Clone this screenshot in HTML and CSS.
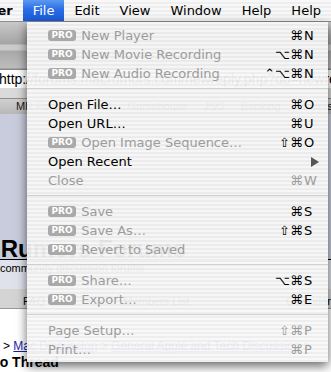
FILE: index.html
```html
<!DOCTYPE html>
<html lang="en">
<head>
  <meta charset="UTF-8">
  <title>QuickTime Player - File menu</title>
  <link rel="stylesheet" href="styles.css">
</head>
<body>
  <div class="menubar">
    <div class="app-name"><span>QuickTime Player</span></div>
    <div class="menu-title active">File</div>
    <div class="menu-title">Edit</div>
    <div class="menu-title">View</div>
    <div class="menu-title">Window</div>
    <div class="menu-title">Help</div>
    <div class="menu-title">Help</div>
  </div>

  <!-- browser window behind the menu -->
  <div class="page">
    <div class="toolbar"></div>
    <div class="address"><span>http://forums.macrumors.com/newreply.php?do=newreply&amp;noquote=1</span></div>
    <div class="address-gap"></div>
    <div class="bookmarks">
      <span>MR Forums</span><span>iPod</span><span>Gamehouse</span><span>JSG</span><span>Banking</span><span>Movers</span>
    </div>
    <div class="banner"><div class="logo">MacRumors Forums</div></div>
    <div class="tagline">community discussion forums</div>
    <div class="navbar">
      <span class="nav-item">FAQ</span><span class="nav-item">Members List</span><span class="nav-item">Calendar</span>
    </div>
    <div class="content">
      <div class="breadcrumb">&gt; <a href="#">Mac Discussion</a> &gt; <a href="#">General Apple and Tech Discussion</a> &gt;</div>
      <div class="thread-title">Reply to Thread</div>
    </div>
  </div>

  <div class="dropdown">
    <div class="item disabled">
      <span class="label"><span class="pro">PRO</span>New Player</span>
      <span class="shortcut"><span class="mods">⌘</span><span class="key">N</span></span>
    </div>
    <div class="item disabled">
      <span class="label"><span class="pro">PRO</span>New Movie Recording</span>
      <span class="shortcut"><span class="mods">⌥⌘</span><span class="key">N</span></span>
    </div>
    <div class="item disabled">
      <span class="label"><span class="pro">PRO</span>New Audio Recording</span>
      <span class="shortcut"><span class="mods">⌃⌥⌘</span><span class="key">N</span></span>
    </div>
    <div class="separator"></div>
    <div class="item">
      <span class="label">Open File…</span>
      <span class="shortcut"><span class="mods">⌘</span><span class="key">O</span></span>
    </div>
    <div class="item">
      <span class="label">Open URL…</span>
      <span class="shortcut"><span class="mods">⌘</span><span class="key">U</span></span>
    </div>
    <div class="item disabled">
      <span class="label"><span class="pro">PRO</span>Open Image Sequence…</span>
      <span class="shortcut"><span class="mods">⇧⌘</span><span class="key">O</span></span>
    </div>
    <div class="item">
      <span class="label">Open Recent</span>
      <span class="submenu-arrow"></span>
    </div>
    <div class="item disabled">
      <span class="label">Close</span>
      <span class="shortcut off"><span class="mods">⌘</span><span class="key">W</span></span>
    </div>
    <div class="separator"></div>
    <div class="item disabled">
      <span class="label"><span class="pro">PRO</span>Save</span>
      <span class="shortcut"><span class="mods">⌘</span><span class="key">S</span></span>
    </div>
    <div class="item disabled">
      <span class="label"><span class="pro">PRO</span>Save As…</span>
      <span class="shortcut"><span class="mods">⇧⌘</span><span class="key">S</span></span>
    </div>
    <div class="item disabled">
      <span class="label"><span class="pro">PRO</span>Revert to Saved</span>
    </div>
    <div class="separator"></div>
    <div class="item disabled">
      <span class="label"><span class="pro">PRO</span>Share…</span>
      <span class="shortcut"><span class="mods">⌥⌘</span><span class="key">S</span></span>
    </div>
    <div class="item disabled">
      <span class="label"><span class="pro">PRO</span>Export…</span>
      <span class="shortcut"><span class="mods">⌘</span><span class="key">E</span></span>
    </div>
    <div class="separator"></div>
    <div class="item disabled">
      <span class="label">Page Setup…</span>
      <span class="shortcut off"><span class="mods">⇧⌘</span><span class="key">P</span></span>
    </div>
    <div class="item disabled">
      <span class="label">Print…</span>
      <span class="shortcut off"><span class="mods">⌘</span><span class="key">P</span></span>
    </div>
  </div>
</body>
</html>
```

FILE: styles.css
```css
html, body {
  margin: 0;
  padding: 0;
}
body {
  width: 331px;
  height: 372px;
  overflow: hidden;
  position: relative;
  background: #fff;
  font-family: 'Liberation Sans', Arial, sans-serif;
  color: #000;
}

/* menu bar */
.menubar {
  display: flex;
  height: 21px;
  line-height: 22px;
  overflow: hidden;
  border-bottom: 1px solid #8c8c8c;
  background: repeating-linear-gradient(to bottom, #f8f8f8 0 2px, #eeeeee 2px 4px);
  font-family: 'DejaVu Sans', sans-serif;
  font-size: 13px;
  white-space: nowrap;
}
.app-name {
  width: 17px;
  margin-right: 10px;
  display: flex;
  justify-content: flex-end;
  overflow: hidden;
  font-weight: bold;
}
.app-name span { flex-shrink: 0; }
.menu-title {
  padding: 0 10px;
}
.menu-title.active {
  color: #fff;
  background: linear-gradient(to bottom, #5b9af2 0%, #2b6ce6 45%, #1a5ada 100%);
}

/* page behind */
.page {
  font-size: 11px;
}
.toolbar {
  height: 48px;
  background: linear-gradient(to bottom, #c9c9c9 0, #a4a4a4 22px, #cbcbcb 23px, #cbcbcb 28px, #a9a9a9 29px, #bdbdbd 46px, #8a8a8a 47px, #8a8a8a 48px);
}
.address {
  height: 18px;
  line-height: 18px;
  background: #fff;
  font-size: 14px;
  white-space: nowrap;
  overflow: hidden;
}
.address span { margin-left: -1px; }
.address-gap {
  height: 11px;
  box-sizing: border-box;
  background: #dadada;
  border-bottom: 1px solid #8e8e8e;
}
.bookmarks {
  height: 15px;
  line-height: 14px;
  padding-left: 16px;
  box-sizing: border-box;
  display: flex;
  gap: 16px;
  white-space: nowrap;
  background: linear-gradient(to bottom, #d0d0d0, #b8b8b8);
  color: #1a1a1a;
}
.banner {
  height: 146px;
  box-sizing: border-box;
  display: flex;
  flex-direction: column;
  justify-content: flex-end;
  background: #c8ccdc;
  border-bottom: 1px solid #000;
}
.logo {
  font-size: 24px;
  line-height: 20px;
  font-weight: bold;
  text-indent: -46px;
  white-space: nowrap;
}
.tagline {
  height: 29px;
  box-sizing: border-box;
  padding-top: 2px;
  line-height: 13px;
  background: #dfe2eb;
  white-space: nowrap;
}
.navbar {
  height: 20px;
  box-sizing: border-box;
  padding: 5px 0 0 23px;
  line-height: 14px;
  display: flex;
  white-space: nowrap;
  background: #d4d4d4;
  border-bottom: 1px solid #999;
}
.nav-item:nth-child(1) { width: 112px; }
.nav-item:nth-child(2) { width: 182px; }
.content {
  padding-top: 30px;
  background: #fff;
}
.breadcrumb {
  font-size: 12px;
  line-height: 14px;
  padding-left: 3px;
  white-space: nowrap;
}
.breadcrumb a { color: #1c1ca8; }
.thread-title {
  margin-top: 1px;
  font-size: 14px;
  line-height: 17px;
  font-weight: bold;
  text-indent: -47px;
  white-space: nowrap;
}

/* the open File menu */
.dropdown {
  position: absolute;
  left: 27px;
  top: 22px;
  width: 301px;
  padding: 4px 0 3px;
  background: repeating-linear-gradient(to bottom, rgba(248,248,248,0.95) 0 2px, rgba(237,237,237,0.95) 2px 4px);
  box-shadow: 0 4px 10px rgba(0,0,0,0.6);
  font-family: 'DejaVu Sans', sans-serif;
  font-size: 13px;
  z-index: 10;
}
.item {
  display: flex;
  align-items: center;
  height: 19px;
  line-height: 19px;
  padding: 0 10px 0 21px;
  white-space: nowrap;
}
.label {
  flex: 1;
}
.item.disabled .label {
  color: #9c9c9c;
}
.pro {
  display: inline-block;
  height: 11px;
  line-height: 11px;
  padding: 0 3.5px;
  margin-right: 5px;
  border-radius: 3px;
  background: #a9a9a9;
  color: #fff;
  font-size: 9px;
  font-weight: bold;
  vertical-align: 2px;
}
.shortcut {
  display: flex;
  color: #000;
}
.shortcut.off {
  color: #9c9c9c;
}
.mods {
  margin-right: 1px;
}
.key {
  width: 14px;
}
.submenu-arrow {
  width: 0;
  height: 0;
  margin-right: -1px;
  border-left: 8px solid #555;
  border-top: 5px solid transparent;
  border-bottom: 5px solid transparent;
}
.separator {
  height: 1px;
  margin: 5px 0 6px;
  background: #d0d0d0;
}
```
